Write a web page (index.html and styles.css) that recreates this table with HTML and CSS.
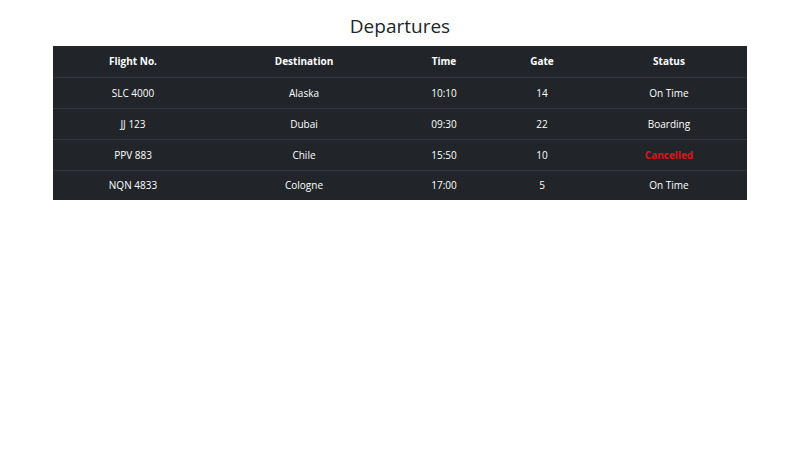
FILE: index.html
```html
<!DOCTYPE html>
<html>
	<head>
		<meta charset="UTF-8">
		<title>Departures</title>
		<link rel="stylesheet" href="styles.css">
	</head>
	<body>
		<h1 class="title">Departures</h1>
		<table class="board">
			<colgroup>
				<col class="c-flight">
				<col class="c-dest">
				<col class="c-time">
				<col class="c-gate">
				<col class="c-status">
			</colgroup>
			<thead>
				<tr>
					<th>Flight No.</th>
					<th>Destination</th>
					<th>Time</th>
					<th>Gate</th>
					<th>Status</th>
				</tr>
			</thead>
			<tbody>
				<tr>
					<td>SLC 4000</td>
					<td>Alaska</td>
					<td>10:10</td>
					<td>14</td>
					<td>On Time</td>
				</tr>
				<tr>
					<td>JJ 123</td>
					<td>Dubai</td>
					<td>09:30</td>
					<td>22</td>
					<td>Boarding</td>
				</tr>
				<tr>
					<td>PPV 883</td>
					<td>Chile</td>
					<td>15:50</td>
					<td>10</td>
					<td class="cancelled">Cancelled</td>
				</tr>
				<tr>
					<td>NQN 4833</td>
					<td>Cologne</td>
					<td>17:00</td>
					<td>5</td>
					<td>On Time</td>
				</tr>
			</tbody>
		</table>
	</body>
</html>
```
FILE: styles.css
```css
*{margin: 0;padding: 0;box-sizing: border-box;}
body{
	background: #fff;
	font-family: "Open Sans", "Noto Sans", sans-serif;
	color: #212529;
	padding: 0 53px;
}
.title{
	font-weight: 400;
	font-size: 19px;
	line-height: 28px;
	text-align: center;
	padding: 12px 0 6px;
}
.board{
	width: 100%;
	border-collapse: collapse;
	table-layout: fixed;
	background: #212529;
	color: #fff;
	font-size: 10px;
}
.c-flight{width: 160px;}
.c-dest{width: 182px;}
.c-time{width: 98px;}
.c-gate{width: 98px;}
.c-status{width: 156px;}
.board th,
.board td{
	text-align: center;
	height: 31px;
	padding: 0 8px;
	border-top: 1px solid #32383e;
}
.board th{
	font-weight: 700;
	border-top: none;
}
.board tbody tr:last-child td{
	height: 30px;
}
.cancelled{
	color: #e3101a;
	font-weight: 700;
}
```
